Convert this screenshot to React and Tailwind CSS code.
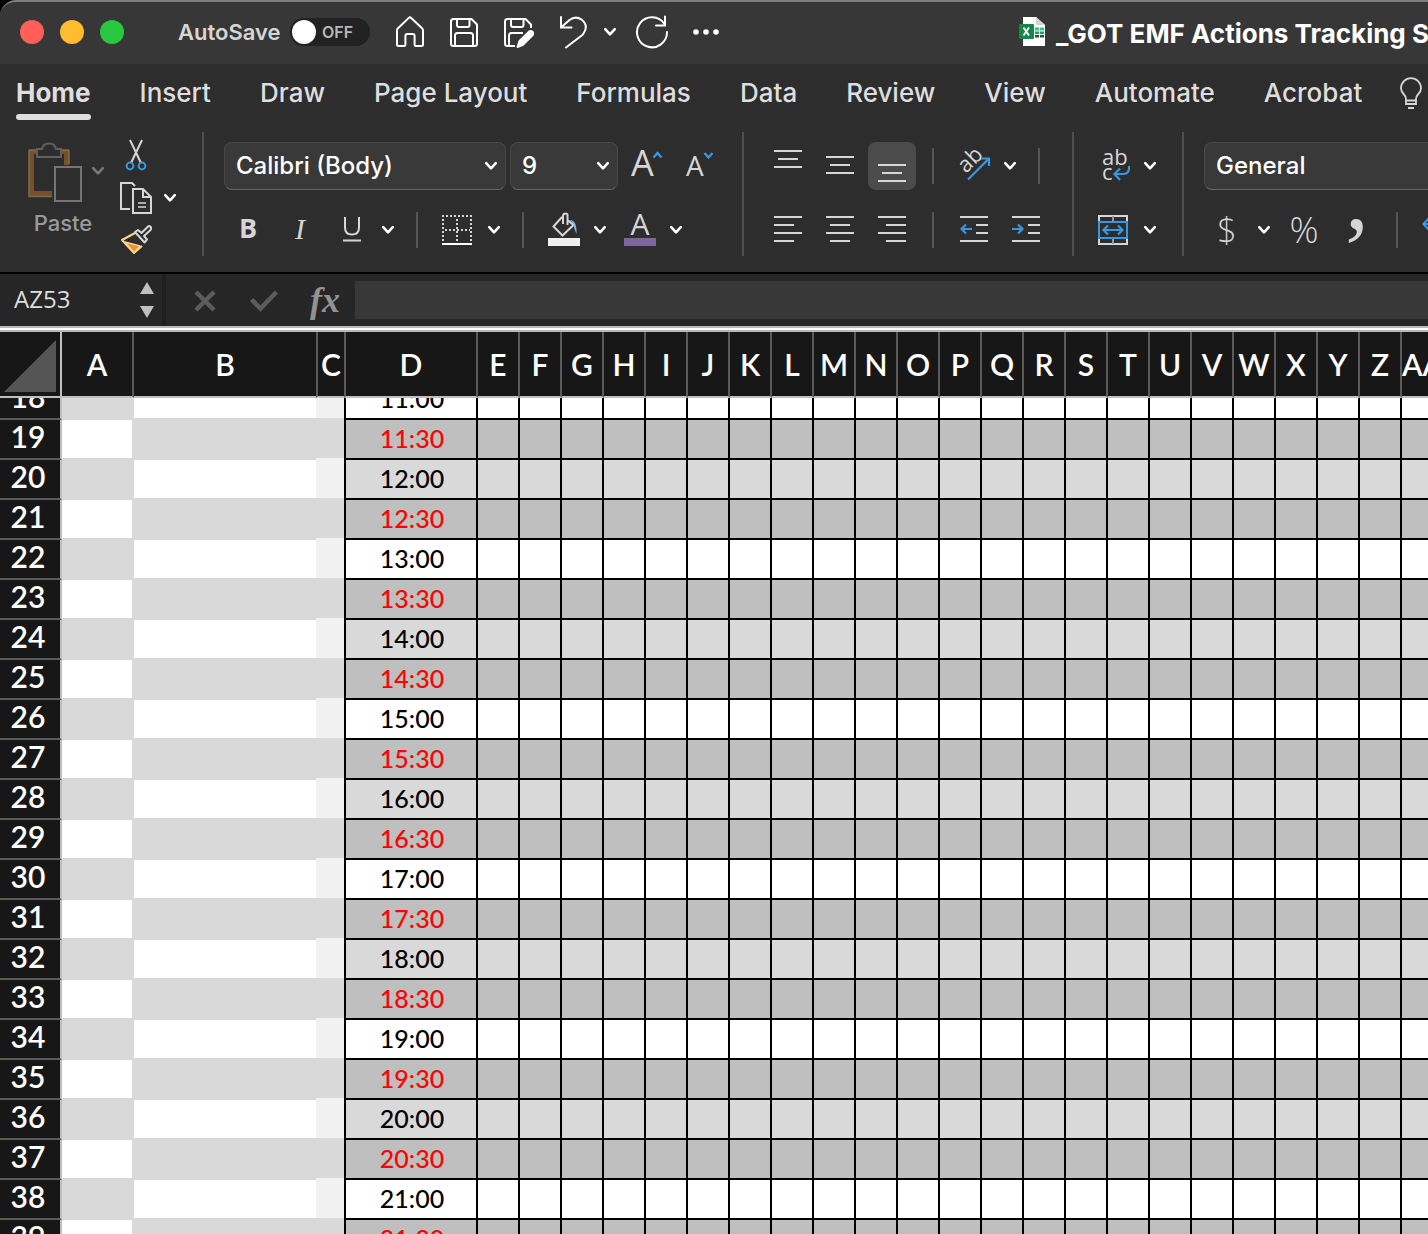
import { useState } from "react";
import clsx from "clsx";

const TABS = ["Home", "Insert", "Draw", "Page Layout", "Formulas", "Data", "Review", "View", "Automate", "Acrobat"];

const LETTERS = "EFGHIJKLMNOPQRSTUVWXYZ".split("").concat("AA");

// rows 18 - 39, one every half hour from 11:00
const ROWS = Array.from({ length: 22 }, (_, i) => {
    const half = i % 2 === 1;
    return {
        number: 18 + i,
        time: `${11 + Math.floor(i / 2)}:${half ? "30" : "00"}`,
        half,
        fill: half ? "bg-[#bfbfbf]" : i % 4 === 0 ? "bg-white" : "bg-[#d9d9d9]",
    };
});

function Chevron({ className = "text-white" }) {
    return (
        <svg width="14" height="10" viewBox="0 0 14 10" className={clsx("shrink-0", className)} fill="none" stroke="currentColor" strokeWidth="2.6" strokeLinecap="round" strokeLinejoin="round">
            <path d="M2.2 2.2L7 7.4L11.8 2.2" />
        </svg>
    );
}

function IconButton({ label, className, children }) {
    return (
        <button type="button" aria-label={label} className={clsx("flex shrink-0 items-center justify-center", className)}>
            {children}
        </button>
    );
}

function DropButton({ label, className, tone }) {
    return (
        <IconButton label={label} className={clsx("h-8 w-[14px]", className)}>
            <Chevron className={tone} />
        </IconButton>
    );
}

function Separator({ className }) {
    return <div className={clsx("h-9 w-[2px] shrink-0 bg-[#555555]", className)} />;
}

function GroupLine() {
    return <div className="h-[124px] w-[2px] shrink-0 bg-[#505050]" />;
}

function SelectBox({ label, value, className }) {
    return (
        <div className={clsx("flex h-12 shrink-0 items-center rounded-lg border border-[#484848] border-b-[#666666] bg-[#393939] pr-[7px] pl-[11px]", className)}>
            <select aria-label={label} className="h-full min-w-0 flex-1 appearance-none bg-transparent text-2xl font-medium text-white outline-none" defaultValue={value}>
                <option className="text-black">{value}</option>
            </select>
            <Chevron />
        </div>
    );
}

// lines: list of [x, y, width]
function Lines({ lines, children }) {
    return (
        <svg width="28" height="32" viewBox="0 0 28 32" fill="none">
            {lines.map(([x, y, w]) => (
                <rect key={`${x}-${y}`} x={x} y={y} width={w} height="2" fill="#d6d6d6" />
            ))}
            {children}
        </svg>
    );
}

function TitleBar() {
    const [autoSave, setAutoSave] = useState(false);

    return (
        <header className="flex h-16 shrink-0 items-center overflow-hidden rounded-tl-2xl border-t-2 border-[#7d7d7d] bg-[#373737] pb-[2px] pl-5">
            <div className="flex shrink-0 gap-4">
                <button type="button" aria-label="Close" className="size-6 rounded-full bg-[#ff5f57]" />
                <button type="button" aria-label="Minimize" className="size-6 rounded-full bg-[#febc2e]" />
                <button type="button" aria-label="Zoom" className="size-6 rounded-full bg-[#28c840]" />
            </div>

            <span className="ml-[54px] w-28 shrink-0 text-[22px] font-semibold text-[#d6d6d6]">AutoSave</span>
            <button
                type="button"
                role="switch"
                aria-checked={autoSave}
                aria-label="AutoSave"
                onClick={() => setAutoSave(!autoSave)}
                className="flex h-7 w-20 shrink-0 items-center gap-[6px] rounded-full bg-[#222222] pl-[2px]"
            >
                <span className="size-6 rounded-full bg-white" />
                <span className="text-base font-semibold text-[#b8b8b8]">OFF</span>
            </button>

            <IconButton label="Home" className="ml-6 w-8">
                <svg width="32" height="34" viewBox="0 0 32 34" fill="none" stroke="#fff" strokeWidth="2" strokeLinejoin="round">
                    <path d="M3 15.2Q3 14 4 13.2L14.8 2.9Q16 1.8 17.2 2.9L28 13.2Q29 14 29 15.2V29.5Q29 31 27.5 31H22Q20.6 31 20.6 29.5V21Q20.6 19 18.6 19H13.4Q11.4 19 11.4 21V29.5Q11.4 31 10 31H4.5Q3 31 3 29.5Z" />
                </svg>
            </IconButton>
            <IconButton label="Save" className="ml-[22px] w-8">
                <svg width="32" height="34" viewBox="0 0 32 34" fill="none" stroke="#fff" strokeWidth="2" strokeLinejoin="round">
                    <path d="M5.5 4H23.5L29 9.5V28.5Q29 31 26.5 31H5.5Q3 31 3 28.5V6.5Q3 4 5.5 4Z" />
                    <path d="M9 4V10Q9 12 11 12H19.5Q21.5 12 21.5 10V4M7 31V20.5Q7 18 9.5 18H22.5Q25 18 25 20.5V31" />
                </svg>
            </IconButton>
            <IconButton label="Save as" className="ml-[22px] w-8">
                <svg width="32" height="34" viewBox="0 0 32 34" fill="none" stroke="#fff" strokeWidth="2" strokeLinejoin="round">
                    <path d="M29 13V9.5L23.5 4H5.5Q3 4 3 6.5V28.5Q3 31 5.5 31H13" />
                    <path d="M9 4V10Q9 12 11 12H19.5Q21.5 12 21.5 10V4M7 31V20.5Q7 18 9.5 18H21" />
                    <path d="M15.5 32L17.5 26L27 16.6Q28.8 15.2 30.4 16.8Q32 18.4 30.5 20.2L21 29.8Z" fill="#fff" />
                </svg>
            </IconButton>
            <IconButton label="Undo" className="ml-6 w-8">
                <svg width="32" height="34" viewBox="0 0 32 34" fill="none" stroke="#fff" strokeWidth="2" strokeLinecap="round">
                    <path d="M3 2V12.5H13.5M3.5 12L11.5 5Q17.5 0.5 23.5 4.5Q31 10.5 25.5 18.5Q25 19.3 24 20.2L8 32.5" />
                </svg>
            </IconButton>
            <DropButton label="Undo history" className="ml-[13px]" />
            <IconButton label="Redo" className="ml-4 w-[38px]">
                <svg width="36" height="36" viewBox="0 0 36 36" fill="none" stroke="#fff" strokeWidth="2" strokeLinecap="round">
                    <path d="M33 18A15 15 0 1 1 30.5 10M31 2.5V11.5H22" />
                </svg>
            </IconButton>
            <IconButton label="More" className="ml-[19px] w-8">
                <svg width="28" height="8" viewBox="0 0 28 8" fill="#fff">
                    <circle cx="4" cy="4" r="2.8" />
                    <circle cx="14" cy="4" r="2.8" />
                    <circle cx="24" cy="4" r="2.8" />
                </svg>
            </IconButton>

            <div className="ml-[296px] flex shrink-0 items-center gap-[10px]">
                <svg width="28" height="32" viewBox="0 0 28 32">
                    <path d="M5 1H18L27 9V30H5Z" fill="#fff" />
                    <path d="M18 1L27 9H18Z" fill="#d4d4d4" />
                    <path d="M17 11.5h4v3h-4zM22 11.5h4v3h-4z" fill="#34c481" />
                    <path d="M17 15.5h4v2.500h-4zM22 15.5h4v2.500h-4z" fill="#1e9e62" />
                    <path d="M17 19h4v2.500h-4zM22 19h4v2.500h-4z" fill="#185c37" />
                    <rect x="1" y="8" width="15" height="15" rx="1" fill="#17864c" />
                    <path d="M5.5 11.5L11 19.5M11 11.5L5.5 19.5" stroke="#fff" strokeWidth="1.8" />
                </svg>
                <h1 className="pt-[2px] text-[26px] font-bold whitespace-nowrap text-white">_GOT EMF Actions Tracking S</h1>
            </div>
        </header>
    );
}

function TabBar({ active, onSelect }) {
    return (
        <nav className="flex h-[60px] shrink-0 items-start gap-[49px] overflow-hidden pt-3 pl-4">
            {TABS.map(tab => (
                <button
                    key={tab}
                    type="button"
                    onClick={() => onSelect(tab)}
                    className={clsx("shrink-0 text-[26px] leading-[34px] whitespace-nowrap text-[#dedede]", tab === active ? "font-bold" : "font-medium")}
                >
                    {tab}
                    {tab === active && <span className="mt-1 block h-[6px] rounded-full bg-[#dedede]" />}
                </button>
            ))}
            <IconButton label="Tell me" className="-ml-3 h-9 w-6">
                <svg width="24" height="34" viewBox="0 0 24 34" fill="none" stroke="#d6d6d6" strokeWidth="1.8">
                    <path d="M7 27V22Q7 19.5 5 17.5Q2 14.5 2 11.2A10 10 0 0 1 22 11.2Q22 14.5 19 17.5Q17 19.5 17 22V27ZM7 23.5H17M9 31H15" />
                </svg>
            </IconButton>
        </nav>
    );
}

function ClipboardGroup() {
    return (
        <div className="flex w-[202px] shrink-0 pl-7">
            <div className="flex w-[66px] flex-col pt-[10px]">
                <button type="button" className="flex flex-col text-[#9a9a9a]">
                    <svg width="54" height="60" viewBox="0 0 54 60" fill="none">
                        <path d="M10 9.5H3.5V51.5H24M32 9.5H38.5V23" stroke="#75502a" strokeWidth="5" />
                        <path d="M9 8.5H1V54.5H24M33 8.5H41V22" stroke="#7a6a4c" strokeWidth="1.6" />
                        <path d="M9 15V7H14Q15 1.5 21 1.5T28 7H33V15Z" stroke="#606060" strokeWidth="2" fill="#2d2d2d" />
                        <rect x="27" y="25" width="26" height="34" stroke="#757575" strokeWidth="2" fill="#2d2d2d" />
                    </svg>
                    <span className="ml-1 text-[22px] leading-[42px] font-medium">Paste</span>
                </button>
            </div>
            <DropButton label="Paste options" className="-ml-[3px] mt-[23px]" tone="text-[#777777]" />
            <div className="ml-[15px] flex flex-col gap-[10px] pt-2">
                <IconButton label="Cut" className="h-8 w-8">
                    <svg width="32" height="34" viewBox="0 0 32 34" fill="none">
                        <path d="M10 1L21 24M22 1L11 24" stroke="#d6d6d6" strokeWidth="2" />
                        <circle cx="10" cy="27" r="3.4" stroke="#3a96dd" strokeWidth="2" />
                        <circle cx="22" cy="27" r="3.4" stroke="#3a96dd" strokeWidth="2" />
                    </svg>
                </IconButton>
                <IconButton label="Copy" className="h-8 w-8">
                    <svg width="32" height="32" viewBox="0 0 32 32" fill="none" stroke="#d6d6d6" strokeWidth="2">
                        <path d="M10 27H1V1H12L15 4M13 7H23L31 15V31H13ZM23 7V15H31" />
                        <path d="M18 21H26M18 25H26" strokeWidth="1.6" />
                    </svg>
                </IconButton>
                <IconButton label="Format painter" className="h-8 w-8">
                    <svg width="32" height="32" viewBox="0 0 32 32" fill="none" strokeWidth="2" strokeLinejoin="round">
                        <path d="M15 9L2 16L14 29L22 22" stroke="#fbd38a" />
                        <path d="M5 18L20 22L14 28.5Z" fill="#e8912d" stroke="#fbd38a" strokeWidth="1.4" />
                        <path d="M15 8L18 6L21.5 9L28 2.5Q30 1.5 31 3.5Q31.5 5 30 6.5L24 12L27 15.5L24.5 18.5Z" stroke="#d6d6d6" />
                    </svg>
                </IconButton>
            </div>
            <DropButton label="Copy options" className="mt-[50px] ml-[11px]" />
        </div>
    );
}

function FontGroup() {
    return (
        <div className="flex w-[538px] shrink-0 flex-col gap-4 pt-[10px] pl-5">
            <div className="flex h-12 items-center">
                <SelectBox label="Font" value="Calibri (Body)" className="w-[282px]" />
                <SelectBox label="Font size" value="9" className="ml-1 w-[108px]" />
                <IconButton label="Increase font size" className="ml-3 w-9">
                    <svg width="36" height="48" viewBox="0 0 36 48" fill="none" className="overflow-visible">
                        <text x="1" y="34" fontSize="36" fill="#d6d6d6" className="font-['Open_Sans']">A</text>
                        <path d="M23.5 15.5L27.5 11L31.5 15.5" stroke="#3a96dd" strokeWidth="2.4" />
                    </svg>
                </IconButton>
                <IconButton label="Decrease font size" className="ml-[18px] w-9">
                    <svg width="36" height="48" viewBox="0 0 36 48" fill="none" className="overflow-visible">
                        <text x="2" y="34" fontSize="28" fill="#d6d6d6" className="font-['Open_Sans']">A</text>
                        <path d="M20.5 11L24.5 15.5L28.5 11" stroke="#3a96dd" strokeWidth="2.4" />
                    </svg>
                </IconButton>
            </div>
            <div className="flex h-12 items-center text-[#d6d6d6]">
                <IconButton label="Bold" className="ml-2 h-9 w-8 pb-1 text-[27px] font-bold font-['Open_Sans']">B</IconButton>
                <IconButton label="Italic" className="ml-5 h-9 w-8 pb-1 font-['Liberation_Serif'] text-[30px] italic">I</IconButton>
                <IconButton label="Underline" className="ml-5 h-9 w-8 pb-[2px]">
                    <svg width="20" height="28" viewBox="0 0 20 28" fill="none" stroke="#d6d6d6" strokeWidth="2">
                        <path d="M3 2V12.5Q3 19.5 10 19.5T17 12.5V2M1 25.5H19" />
                    </svg>
                </IconButton>
                <DropButton label="Underline options" className="ml-[13px]" />
                <Separator className="ml-[21px]" />
                <IconButton label="Borders" className="ml-6 w-[30px]">
                    <svg width="30" height="32" viewBox="0 0 30 32" fill="none" stroke="#d6d6d6" strokeWidth="2">
                        <path d="M0 2H30M1 5V27M29 5V27M15 5V27M3 16H28" strokeDasharray="2 2" />
                        <path d="M0 30H30" stroke="#fff" />
                    </svg>
                </IconButton>
                <DropButton label="Border options" className="ml-[15px]" />
                <Separator className="ml-[21px]" />
                <IconButton label="Fill color" className="ml-6 w-8 pb-[2px]">
                    <svg width="32" height="34" viewBox="0 0 32 34" fill="none" stroke="#d6d6d6" strokeWidth="2">
                        <path d="M14 5L5.5 14.5L14.5 23.5L25.5 13L19.5 8M15 12V4Q15 1.5 17.5 1.5T19.5 4V13" />
                        <path d="M22 8Q29 8 28.5 22Q26 17 25.5 12Z" fill="#7bb8ea" stroke="none" />
                        <rect x="0" y="26" width="32" height="8" fill="#f0eeee" stroke="none" />
                    </svg>
                </IconButton>
                <DropButton label="Fill options" className="ml-[13px]" />
                <IconButton label="Font color" className="ml-[17px] w-8 pb-[2px]">
                    <svg width="32" height="34" viewBox="0 0 32 34" className="overflow-visible">
                        <text x="16" y="23" fontSize="30" textAnchor="middle" fill="#d6d6d6" className="font-['Open_Sans']">A</text>
                        <rect x="0" y="26" width="32" height="8" fill="#8064a2" />
                    </svg>
                </IconButton>
                <DropButton label="Font color options" className="ml-[13px]" />
            </div>
        </div>
    );
}

function AlignGroup() {
    return (
        <div className="flex w-[328px] shrink-0 flex-col gap-4 pt-[10px] pl-5">
            <div className="flex h-12 items-center">
                <IconButton label="Top align" className="h-12 w-12">
                    <Lines lines={[[0, 0, 28], [4, 8, 20], [0, 16, 28]]} />
                </IconButton>
                <IconButton label="Middle align" className="ml-1 h-12 w-12">
                    <Lines lines={[[0, 6, 28], [4, 14, 20], [0, 22, 28]]} />
                </IconButton>
                <IconButton label="Bottom align" className="ml-1 h-12 w-12 rounded-lg bg-[#4b4b4b]">
                    <Lines lines={[[0, 14, 28], [4, 22, 20], [0, 30, 28]]} />
                </IconButton>
                <Separator className="ml-4" />
                <IconButton label="Orientation" className="ml-[22px] w-9">
                    <svg width="36" height="36" viewBox="0 0 36 36" fill="none" className="overflow-visible">
                        <text transform="translate(10 26) rotate(-45)" fontSize="22" fill="#d6d6d6" className="font-['Open_Sans']">ab</text>
                        <path d="M12 31.5L32.5 11M25 10.5H33V18" stroke="#3a96dd" strokeWidth="2.2" />
                    </svg>
                </IconButton>
                <DropButton label="Orientation options" className="ml-[11px]" />
                <Separator className="ml-[21px]" />
            </div>
            <div className="flex h-12 items-center">
                <IconButton label="Align left" className="w-12">
                    <Lines lines={[[0, 2, 28], [0, 10, 20], [0, 18, 28], [0, 26, 20]]} />
                </IconButton>
                <IconButton label="Center" className="ml-1 w-12">
                    <Lines lines={[[0, 2, 28], [4, 10, 20], [0, 18, 28], [4, 26, 20]]} />
                </IconButton>
                <IconButton label="Align right" className="ml-1 w-12">
                    <Lines lines={[[0, 2, 28], [8, 10, 20], [0, 18, 28], [8, 26, 20]]} />
                </IconButton>
                <Separator className="ml-4" />
                <IconButton label="Decrease indent" className="ml-4 w-12">
                    <Lines lines={[[0, 2, 28], [16, 10, 12], [16, 18, 12], [0, 26, 28]]}>
                        <path d="M12 15H1.5M6 10.5L1.5 15L6 19.5" stroke="#3a96dd" strokeWidth="2.2" />
                    </Lines>
                </IconButton>
                <IconButton label="Increase indent" className="ml-1 w-12">
                    <Lines lines={[[0, 2, 28], [16, 10, 12], [16, 18, 12], [0, 26, 28]]}>
                        <path d="M0 15H10.5M6 10.5L10.5 15L6 19.5" stroke="#3a96dd" strokeWidth="2.2" />
                    </Lines>
                </IconButton>
            </div>
        </div>
    );
}

function WrapGroup() {
    return (
        <div className="flex w-[108px] shrink-0 flex-col gap-4 pt-[10px] pl-6">
            <div className="flex h-12 items-center">
                <IconButton label="Wrap text" className="w-8">
                    <svg width="32" height="36" viewBox="0 0 32 36" fill="none" className="overflow-visible">
                        <text fontSize="22" fill="#d6d6d6" className="font-['Open_Sans']">
                            <tspan x="4" y="17">ab</tspan>
                            <tspan x="4" y="32">c</tspan>
                        </text>
                        <path d="M31 18Q32 26 25 26H17M22 20.5L16.5 26L22 32" stroke="#3a96dd" strokeWidth="2.2" />
                    </svg>
                </IconButton>
                <DropButton label="Wrap options" className="ml-[13px]" />
            </div>
            <div className="flex h-12 items-center">
                <IconButton label="Merge and center" className="w-[30px]">
                    <svg width="30" height="32" viewBox="0 0 30 32" fill="none" strokeWidth="2">
                        <path d="M1 7V2H29V7M1 25V30H29V25" stroke="#d6d6d6" />
                        <path d="M15 2V7M15 25V30" stroke="#999" />
                        <rect x="1" y="8" width="28" height="16" stroke="#3a96dd" />
                        <path d="M5.5 16H24.5M10 11.5L5.5 16L10 20.5M20 11.5L24.5 16L20 20.5" stroke="#3a96dd" strokeWidth="2.2" />
                    </svg>
                </IconButton>
                <DropButton label="Merge options" className="ml-[15px]" />
            </div>
        </div>
    );
}

function NumberGroup() {
    return (
        <div className="flex min-w-0 flex-1 flex-col gap-4 overflow-hidden pt-[10px] pl-5">
            <div className="flex h-12 items-center">
                <SelectBox label="Number format" value="General" className="w-[282px]" />
            </div>
            <div className="flex h-12 items-center text-[#d6d6d6]">
                <IconButton label="Currency" className="ml-[7px] h-12 w-8 font-['Open_Sans'] text-[34px] font-light">$</IconButton>
                <DropButton label="Currency options" className="ml-[14px]" />
                <IconButton label="Percent" className="ml-[15px] h-12 w-9 font-['Open_Sans'] text-4xl font-light">%</IconButton>
                <IconButton label="Comma style" className="ml-[17px] w-9">
                    <svg width="36" height="48" viewBox="0 0 36 48" className="overflow-visible">
                        <text x="18" y="23" fontSize="94" textAnchor="middle" fill="#d6d6d6" className="font-['Liberation_Serif']">,</text>
                    </svg>
                </IconButton>
                <Separator className="ml-[21px]" />
                <IconButton label="Increase decimal" className="ml-6 w-9">
                    <svg width="36" height="32" viewBox="0 0 36 32" fill="none">
                        <path d="M14 10H1.5M6.5 4.5L1.5 10L6.5 15.5" stroke="#3a96dd" strokeWidth="2.2" />
                    </svg>
                </IconButton>
            </div>
        </div>
    );
}

function FormulaBar() {
    return (
        <div className="flex h-[54px] shrink-0 items-center border-t-2 border-black bg-[#262626]">
            <input
                aria-label="Name box"
                defaultValue="AZ53"
                className="h-12 w-[138px] shrink-0 bg-transparent pb-1 pl-[14px] font-['Open_Sans'] text-2xl font-medium text-[#dedede] outline-none"
            />
            <div className="flex w-[24px] shrink-0 flex-col gap-[10px] pl-[2px]">
                <button type="button" aria-label="Previous name" className="h-[14px]">
                    <svg width="14" height="14" viewBox="0 0 14 14"><path d="M7 1L14 13H0Z" fill="#c0c0c0" /></svg>
                </button>
                <button type="button" aria-label="Next name" className="h-[14px]">
                    <svg width="14" height="14" viewBox="0 0 14 14"><path d="M7 13L14 1H0Z" fill="#c0c0c0" /></svg>
                </button>
            </div>
            <div className="h-full w-1 shrink-0 bg-[#1f1f1f]" />
            <IconButton label="Cancel" className="ml-[23px] w-8 pt-[2px]">
                <svg width="24" height="24" viewBox="0 0 24 24" fill="none" stroke="#5c5c5c" strokeWidth="4.5">
                    <path d="M3 3L21 21M21 3L3 21" />
                </svg>
            </IconButton>
            <IconButton label="Enter" className="ml-[27px] w-8 pt-[2px]">
                <svg width="30" height="24" viewBox="0 0 30 24" fill="none" stroke="#5c5c5c" strokeWidth="4.5">
                    <path d="M2.5 10.5L11.5 19.5L27.5 3" />
                </svg>
            </IconButton>
            <IconButton label="Insert function" className="ml-[27px] h-12 w-9 font-['Liberation_Serif'] text-4xl font-bold text-[#929292] italic">fx</IconButton>
            <input aria-label="Formula" className="ml-3 h-[38px] min-w-0 flex-1 bg-[#383838] px-3 text-2xl text-white outline-none" />
        </div>
    );
}

function Sheet() {
    const line = {
        A: "border-r-2",
        B: "",
        C: "border-l-2",
        D: "border-x-2",
    };

    return (
        <main className="min-h-0 flex-1 overflow-hidden border-t-6 border-double border-[#b8b8b8] bg-white">
            <table className="w-[1444px] table-fixed border-separate border-spacing-0 font-['Lato']">
                <colgroup>
                    <col className="w-[62px]" />
                    <col className="w-[72px]" />
                    <col className="w-[182px]" />
                    <col className="w-[28px]" />
                    <col className="w-[134px]" />
                    {LETTERS.map(letter => <col key={letter} className="w-[42px]" />)}
                </colgroup>
                <thead>
                    <tr>
                        <th className="h-[66px] border-r-2 border-b-2 border-[#bfbfbf] bg-[#171717] p-0">
                            <svg width="60" height="64" viewBox="0 0 60 64" className="block"><path d="M4 60L56 8V60Z" fill="#555555" /></svg>
                        </th>
                        {["A", "B", "C", "D", ...LETTERS].map(letter => (
                            <th
                                key={letter}
                                scope="col"
                                className={clsx("h-[66px] border-x-[#5a5a5a] border-b-2 border-b-[#bfbfbf] bg-[#171717] p-0 text-center align-middle text-[30px] leading-8 font-semibold text-white", line[letter] ?? "border-r-2")}
                            >
                                {letter}
                            </th>
                        ))}
                    </tr>
                </thead>
                <tbody>
                    {ROWS.map((row, i) => {
                        // the first row is scrolled half under the header
                        const height = i === 0 ? "h-[22px]" : "h-10";
                        const inner = clsx("flex justify-center overflow-hidden", i === 0 ? "h-5 items-end" : "h-[38px] items-center");
                        return (
                            <tr key={row.number}>
                                <th scope="row" className={clsx(height, "border-r-2 border-b-2 border-r-[#bfbfbf] border-b-[#5a5a5a] bg-[#171717] p-0 text-3xl leading-8 font-semibold text-white")}>
                                    <div className={clsx(inner, "pr-1")}><span className="shrink-0 pb-[6px]">{row.number}</span></div>
                                </th>
                                <td className={clsx("border-r-2 border-b-2 border-[#d9d9d9] p-0", row.half ? "bg-white" : "bg-[#d9d9d9]")} />
                                <td className={clsx("border-b-2 border-[#d9d9d9] p-0", row.half ? "bg-[#d9d9d9]" : "bg-white")} />
                                <td className={clsx("border-b-2 p-0", row.half ? "border-[#f1f1f1] bg-[#d9d9d9]" : "border-[#d9d9d9] bg-[#f1f1f1]")} />
                                <td className={clsx("border-x-2 border-b-2 border-black p-0 text-[25px] leading-9 font-medium", row.fill, row.half ? "text-[#ff0000]" : "text-black")}>
                                    <div className={clsx(inner, "pl-[2px]")}><span className="shrink-0 pb-[2px]">{row.time}</span></div>
                                </td>
                                {LETTERS.map(letter => (
                                    <td key={letter} className={clsx("border-r-2 border-b-2 border-black p-0", row.fill)} />
                                ))}
                            </tr>
                        );
                    })}
                </tbody>
            </table>
        </main>
    );
}

export default function App() {
    const [tab, setTab] = useState("Home");

    return (
        <div className="flex h-screen flex-col overflow-hidden bg-black font-['Inter',sans-serif]">
            <TitleBar />
            <div className="shrink-0 bg-[#2d2d2d]">
                <TabBar active={tab} onSelect={setTab} />
                <div className="flex h-[148px] overflow-hidden pt-2">
                    <ClipboardGroup />
                    <GroupLine />
                    <FontGroup />
                    <GroupLine />
                    <AlignGroup />
                    <GroupLine />
                    <WrapGroup />
                    <GroupLine />
                    <NumberGroup />
                </div>
            </div>
            <FormulaBar />
            <Sheet />
        </div>
    );
}
